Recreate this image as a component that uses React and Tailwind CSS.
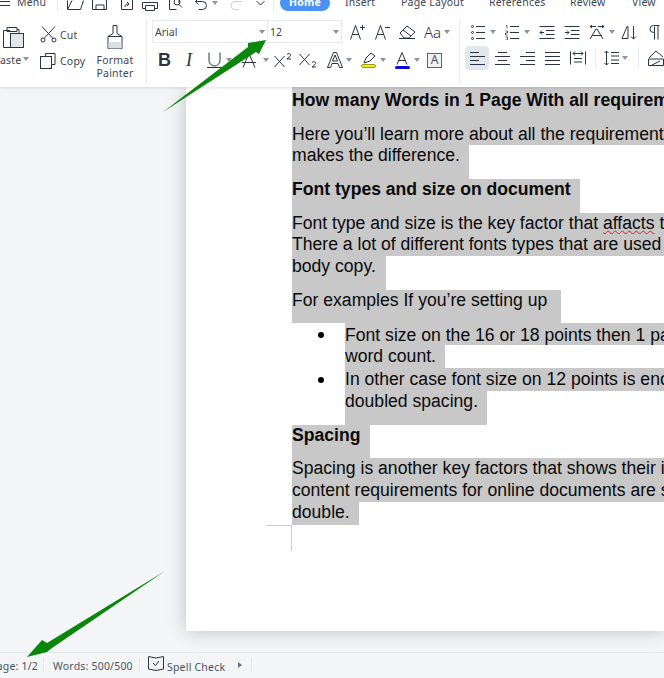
const ink = "#2b3442";

const Ic = ({ w = 16, h = 16, className = "", children }) => (
  <svg
    width={w}
    height={h}
    viewBox={`0 0 ${w} ${h}`}
    fill="none"
    stroke={ink}
    strokeWidth="1"
    className={`shrink-0 block ${className}`}
  >
    {children}
  </svg>
);

const Caret = ({ className = "" }) => (
  <svg width="6" height="4" viewBox="0 0 6 4" className={`shrink-0 block ${className}`}>
    <path d="M0 0h6L3 4z" fill="#8b93a0" />
  </svg>
);

const Sep = ({ className = "" }) => <div className={`w-px bg-[#e8eaed] shrink-0 ${className}`} />;

const lines = [
  { text: "How many Words in 1 Page With all requirements", bold: true, box: "h-[36px] pt-[2px]" },
  { text: "Here you’ll learn more about all the requirements", box: "h-[22px]" },
  { text: "makes the difference.", tight: true, box: "h-[34px] w-[177px]" },
  { text: "Font types and size on document", bold: true, tight: true, box: "h-[34px] w-[288px]" },
  { text: "Font type and size is the key factor that", squiggle: "affacts", after: " the", tight: true, box: "h-[21px]" },
  { text: "There a lot of different fonts types that are used", tight: true, box: "h-[22px]" },
  { text: "body copy.", tight: true, box: "h-[34px] w-[94px]" },
  { text: "For examples If you’re setting up", tight: true, box: "h-[33px] w-[269px]" },
  { text: "Font size on the 16 or 18 points then 1 page", bullet: true, box: "h-[22px] pt-[1px]" },
  { text: "word count.", indent: true, box: "h-[23px] w-[100px]" },
  { text: "In other case font size on 12 points is enough", bullet: true, box: "h-[23px]" },
  { text: "doubled spacing.", indent: true, tight: true, box: "h-[34px] w-[142px]" },
  { text: "Spacing", bold: true, tight: true, box: "h-[33px] w-[78px]" },
  { text: "Spacing is another key factors that shows their importance", tight: true, box: "h-[22px]" },
  { text: "content requirements for online documents are set", tight: true, box: "h-[22px]" },
  { text: "double.", tight: true, box: "h-[23px] w-[67px]" },
];

const DocLine = ({ line }) => {
  const body = (
    <div
      className={`bg-[#c8c8c8] whitespace-nowrap overflow-hidden ${line.tight ? "leading-[20px]" : "leading-[22px]"} ${line.bold ? "font-bold" : ""} ${line.box} ${
        line.bullet || line.indent ? "ml-[53px]" : ""
      }`}
    >
      {line.text}
      {line.squiggle && (
        <>
          {" "}
          <span className="underline decoration-wavy decoration-[#e02020] decoration-1 underline-offset-1">
            {line.squiggle}
          </span>
          {line.after}
        </>
      )}
    </div>
  );

  if (!line.bullet) return body;

  return (
    <div className="relative">
      <div className="absolute left-[26px] top-[9px] w-[6px] h-[6px] rounded-full bg-black" />
      {body}
    </div>
  );
};

const TopStrip = () => (
  <div className="h-[11px] flex overflow-hidden text-[10.5px] leading-[14px] text-[#3d4654] tracking-[0.2px]">
    <Ic w={11} h={11}>
      <path d="M0 1.500h10M0 5.500h10" />
    </Ic>
    <span className="ml-[6px] w-[34px] -mt-[5px]">Menu</span>
    <Sep className="ml-[6px] h-[12px]" />
    <Ic w={18} h={11} className="ml-[9px]">
      <path d="M.5 9.500h13l3-9M.5 9.500v-9M5 .5l-4.500 9" />
    </Ic>
    <Ic w={16} h={11} className="ml-[7px]">
      <path d="M.5 0v9.500h14V0M4 9.500V5h8v4.500" />
    </Ic>
    <Ic w={14} h={11} className="ml-[12px]">
      <path d="M1.500 0v9.500h11V0M5 7c0-3 2-3 4-3M7 6l2-2-2-2" />
    </Ic>
    <Ic w={17} h={11} className="ml-[8px]">
      <path d="M.5 2.500h15v6h-3M.5 2.500v6h3M3.500 5.500h9v5h-9z" />
    </Ic>
    <Ic w={16} h={11} className="ml-[9px]">
      <path d="M1.500 0v9.500h7M11 0v3" />
      <circle cx="9" cy="2" r="3" />
      <path d="M11 4.500l3 3" />
    </Ic>
    <Ic w={14} h={11} className="ml-[11px]">
      <path d="M.5 1.500h7a4 4 0 0 1 0 8h-4M.5 1.500l3-3M.5 1.500l3 3" />
    </Ic>
    <Caret className="ml-[3px] mt-[1px]" />
    <svg width="14" height="11" viewBox="0 0 14 11" fill="none" stroke="#c9ced5" className="ml-[11px] shrink-0">
      <path d="M13 1.500H6a4 4 0 0 0 0 8h4" />
    </svg>
    <Ic w={9} h={11} className="ml-[13px]">
      <path d="M.5 1l4 4 4-4" />
    </Ic>
    <Sep className="ml-[8px] h-[12px]" />
    <div className="ml-[6px] w-[50px] h-[16px] -mt-[5px] rounded-lg bg-[#4a92f6] text-white font-bold text-center leading-[15px]">
      Home
    </div>
    <span className="ml-[15px] w-[56px] -mt-[5px]">Insert</span>
    <span className="w-[88px] -mt-[5px]">Page Layout</span>
    <span className="w-[81px] -mt-[5px]">References</span>
    <span className="w-[62px] -mt-[5px]">Review</span>
    <span className="-mt-[5px]">View</span>
  </div>
);

const ClipboardGroup = () => (
  <div className="w-[146px] h-[76px] flex shrink-0 text-[10.5px] text-[#3d4654] leading-[13px] tracking-[0.2px]">
    <div className="w-[38px] pt-[14px] pl-[2px]">
      <Ic w={22} h={23}>
        <path d="M8 5.500H1.500v17h7M5 2.500h10v4H5zM15 4.500h2v4" />
        <rect x="8.500" y="8.500" width="13" height="14" fill="#e3e5e8" />
      </Ic>
      <div className="flex items-center -ml-[2px] mt-[6px]">
        <span>aste</span>
        <Caret className="ml-[2px] -mt-[3px]" />
      </div>
    </div>
    <div className="w-[59px] pt-[14px] pl-[2px]">
      <div className="flex items-center h-[18px]">
        <Ic w={17} h={17}>
          <path d="M2 .500l11 12M15 .500l-11 12" />
          <circle cx="3" cy="14" r="2" />
          <circle cx="14" cy="14" r="2" />
        </Ic>
        <span className="ml-[3px] mt-[2px]">Cut</span>
      </div>
      <div className="flex items-center h-[17px] mt-[9px]">
        <Ic w={16} h={16}>
          <path d="M5.500 3.500v-3h9.500v11h-3" />
          <rect x=".5" y="3.500" width="11" height="12" />
        </Ic>
        <span className="ml-[4px] mt-[2px]">Copy</span>
      </div>
    </div>
    <div className="w-[36px] pt-[14px] flex flex-col items-center">
      <Ic w={20} h={24}>
        <path d="M8 .500h4v8l5 3v12H3v-12l5-3z" />
        <path d="M3.500 17h13v6.500h-13z" fill="#dcdfe3" stroke="none" />
        <path d="M3 11.500h14" />
      </Ic>
      <div className="text-center whitespace-nowrap mt-[5px]">
        Format
        <br />
        Painter
      </div>
    </div>
  </div>
);

const Combo = ({ label, className }) => (
  <div className={`h-[23px] border border-[#e7e9ec] flex items-center justify-between pl-[2px] pr-[2px] text-[10.5px] text-[#3d4654] ${className}`}>
    <span className="mt-[2px]">{label}</span>
    <Caret />
  </div>
);

const BigA = ({ mark }) => (
  <Ic w={16} h={16}>
    <path d="M.5 15.500l5-14 5 14M2.500 10.500h6" />
    {mark === "plus" && <path d="M10 3.500h5M12.500 1v5" />}
    {mark === "minus" && <path d="M10 3.500h5" />}
  </Ic>
);

const FontGroup = () => (
  <div className="ml-[5px] w-[307px] h-[76px] pt-[9px] shrink-0">
    <div className="flex items-center">
      <Combo label="Arial" className="w-[116px]" />
      <Combo label="12" className="w-[75px] -ml-px" />
      <div className="ml-[8px]"><BigA mark="plus" /></div>
      <div className="ml-[9px]"><BigA mark="minus" /></div>
      <Ic w={17} h={14} className="ml-[8px]">
        <path d="M1 8l7-7 8 6-6 6H5zM4 5l8 6M0 13.500h16" />
      </Ic>
      <span className="ml-[8px] text-[15px] leading-4 font-light text-[#2b3442] w-[17px]">Aa</span>
      <Caret className="ml-[3px]" />
    </div>
    <div className="flex items-center h-[20px] mt-[7px] text-[#2b3442]">
      <span className="ml-[6px] w-[14px] font-['Liberation_Sans',sans-serif] text-[18px] leading-5 font-bold">B</span>
      <span className="ml-[14px] w-[11px] font-['Liberation_Serif',serif] text-[18px] leading-5 italic font-normal">I</span>
      <Ic w={15} h={16} className="ml-[10px]">
        <path d="M2 .500v8a5.500 5.500 0 0 0 11 0v-8M0 15.500h15" />
      </Ic>
      <Caret className="ml-[4px]" />
      <Ic w={14} h={15} className="ml-[10px]">
        <path d="M1 14.500l6-14 6 14M0 9.500h14" />
      </Ic>
      <Caret className="ml-[7px]" />
      <Ic w={18} h={15} className="ml-[5px]">
        <path d="M.5 3l10 11M10.500 3l-10 11M13 1.500c1-1.500 4-1 3.500 1-.3 1.200-2 2-3.500 3.500h4" />
      </Ic>
      <Ic w={18} h={15} className="ml-[7px]">
        <path d="M.5 1l10 11M10.500 1l-10 11M13 9.500c1-1.500 4-1 3.500 1-.3 1.200-2 2-3.500 3.500h4" />
      </Ic>
      <Ic w={16} h={16} className="ml-[10px]">
        <path d="M.5 15.500l6-15h3l6 15h-3l-1.500-4h-6L3.500 15.500zM5.500 9l2.500-6 2.500 6z" />
      </Ic>
      <Caret className="ml-[3px]" />
      <div className="ml-[9px] w-[15px] shrink-0">
        <Ic w={15} h={12}>
          <path d="M3 11l2-5 5-5 4 3-5 5z" />
        </Ic>
        <div className="h-[4px] bg-[#f3ee1b] border border-[#9b9b20] rounded-sm" />
      </div>
      <Caret className="ml-[4px]" />
      <div className="ml-[9px] w-[15px] shrink-0">
        <Ic w={14} h={13}>
          <path d="M2 12.500l5-12 5 12M3.500 8.500h7" />
        </Ic>
        <div className="h-[3px] mt-[1px] bg-[#0b0be0] rounded-sm" />
      </div>
      <Caret className="ml-[4px]" />
      <div className="ml-[7px] w-[15px] h-[15px] border border-[#5a626e] bg-[#f0f1f3] flex items-center justify-center text-[12px] leading-none text-[#4b5563]">
        A
      </div>
    </div>
  </div>
);

const listLines = "M5 1.500h9M5 7.500h9M5 13.500h9";

const Align = ({ d, className = "" }) => (
  <Ic w={15} h={14} className={className}>
    <path d={d} />
  </Ic>
);

const ParagraphGroup = () => (
  <div className="ml-[6px] pt-[13px] shrink-0">
    <div className="flex items-center h-[16px]">
      <Ic w={15} h={15} className="ml-[5px]">
        <path d={listLines} />
        <circle cx="1.500" cy="1.500" r="1" />
        <circle cx="1.500" cy="7.500" r="1" />
        <circle cx="1.500" cy="13.500" r="1" />
      </Ic>
      <Caret className="ml-[4px]" />
      <Ic w={15} h={15} className="ml-[9px]">
        <path d={listLines} />
        <path d="M1 .500h1v3M.5 6h2v2h-2v2h2M.5 12h2v3h-2" strokeWidth=".8" />
      </Ic>
      <Caret className="ml-[4px]" />
      <Ic w={16} h={15} className="ml-[9px]">
        <path d="M.5 1.500h15M7 5.500h8.500M7 9.500h8.500M.5 13.500h15M5 7.500H1M3 5.500l-2 2 2 2" />
      </Ic>
      <Ic w={16} h={15} className="ml-[9px]">
        <path d="M.5 1.500h15M7 5.500h8.500M7 9.500h8.500M.5 13.500h15M1 7.500h4M3 5.500l2 2-2 2" />
      </Ic>
      <Ic w={16} h={15} className="ml-[9px]">
        <path d="M1 1.500h6M1 1.500l2-1.500M1 1.500l2 1.500M15 1.500H9M15 1.500l-2-1.500M15 1.500l-2 1.500M1 14l6-10 1 0 6 10M3 10.500h10" />
      </Ic>
      <Caret className="ml-[4px]" />
      <Ic w={16} h={15} className="ml-[6px]">
        <path d="M1 13.500l5-12h1v12zM12.500 1v13M10 11.500l2.500 2.500 2.500-2.500" />
      </Ic>
      <Ic w={11} h={15} className="ml-[12px]">
        <path d="M5.500 1.500v13M9 .5v14M10.500 .5H4.500a3.500 3.500 0 0 0 0 7H5.500" />
      </Ic>
    </div>
    <div className="flex items-center h-[24px] mt-[6px] -ml-[1px]">
      <div className="w-[24px] h-[24px] rounded-sm bg-[#e3e8ee] flex items-center justify-center">
        <Align d="M0 1.500h9M0 5.500h15M0 9.500h9M0 13.500h15" />
      </div>
      <Align d="M3 1.500h9M0 5.500h15M3 9.500h9M0 13.500h15" className="ml-[6px]" />
      <Align d="M6 1.500h9M0 5.500h15M6 9.500h9M0 13.500h15" className="ml-[10px]" />
      <Align d="M0 1.500h15M0 5.500h15M0 9.500h15M0 13.500h15" className="ml-[10px]" />
      <Ic w={16} h={14} className="ml-[10px]">
        <path d="M.5 .5v13M15.500 .5v13M4 7.500h8M4 11h8M3 2.500h10M3 2.500l2-2M3 2.500l2 2M13 2.500l-2-2M13 2.500l-2 2" />
      </Ic>
      <Sep className="ml-[9px] h-[20px]" />
      <Ic w={15} h={16} className="ml-[8px]">
        <path d="M2.500 1v14M.5 3l2-2 2 2M.5 13l2 2 2-2M7 2.500h8M7 6h8M7 10h8M7 13.500h8" />
      </Ic>
      <Caret className="ml-[3px]" />
      <Sep className="ml-[10px] h-[20px]" />
      <Ic w={17} h={16} className="ml-[9px]">
        <path d="M1 8l7-7 7 6M.5 9h15v6.500H.5zM4 15l8-4" />
      </Ic>
    </div>
  </div>
);

const Ribbon = () => (
  <div className="relative z-10 bg-white h-[87px] font-['Noto_Sans',sans-serif] shadow-[0_1px_3px_rgba(0,0,0,0.12)]">
    <TopStrip />
    <div className="flex h-[76px] overflow-hidden">
      <ClipboardGroup />
      <Sep className="mt-[9px] h-[63px]" />
      <FontGroup />
      <Sep className="mt-[9px] h-[63px]" />
      <ParagraphGroup />
    </div>
  </div>
);

const StatusBar = () => (
  <div className="h-[26px] bg-[#f3f5f7] border-t border-[#e3e5e8] flex items-center overflow-hidden font-['Noto_Sans',sans-serif] text-[10.5px] text-[#4a5361] tracking-[0.2px]">
    <span className="w-[43px] flex justify-end whitespace-nowrap pr-[5px] mt-[2px]">age: 1/2</span>
    <Sep className="h-[15px] bg-[#e1e3e6]" />
    <span className="ml-[9px] w-[86px] whitespace-nowrap mt-[2px]">Words: 500/500</span>
    <Sep className="h-[15px] bg-[#e1e3e6]" />
    <Ic w={16} h={15} className="ml-[8px] -mt-[4px]">
      <path d="M.5 .5l7.500 1.500L15.500 .5v12.500l-7.500 1.500L.5 13z" />
      <path d="M5 7l2.500 2.500 3.500-4.500" />
    </Ic>
    <span className="ml-[3px] w-[65px] whitespace-nowrap mt-[4px]">Spell Check</span>
    <svg width="4" height="6" viewBox="0 0 4 6" className="ml-[6px] -mt-[2px] shrink-0">
      <path d="M0 0l4 3-4 3z" fill="#6b7280" />
    </svg>
    <Sep className="ml-[9px] h-[15px] bg-[#e1e3e6]" />
  </div>
);

export default function App() {
  return (
    <div className="relative w-[664px] h-[678px] overflow-hidden bg-[#f3f5f7]">
      <Ribbon />

      {/* PAGE */}
      <div className="h-[565px] pl-[186px] overflow-hidden">
        <div className="h-[544px] bg-white shadow-[0_0_18px_rgba(0,0,0,0.22)] pl-[106px] text-[17.6px] text-[#0a0a0a] font-['Liberation_Sans',Arial,sans-serif]">
          {lines.map((line) => (
            <DocLine key={line.text} line={line} />
          ))}
          <div className="-ml-[26px] w-[26px] h-[26px] border-t border-r border-[#cfcfcf]" />
        </div>
      </div>

      <StatusBar />

      {/* ARROWS */}
      <svg width="664" height="678" viewBox="0 0 664 678" className="absolute inset-0 z-20 pointer-events-none">
        <path d="M163 112L248 47 248 43 266 40 259 54 256 52z" fill="#0a860a" />
        <path d="M165 571L47 643 42 640 27 657 47 652 52 648z" fill="#0a860a" />
      </svg>
    </div>
  );
}
